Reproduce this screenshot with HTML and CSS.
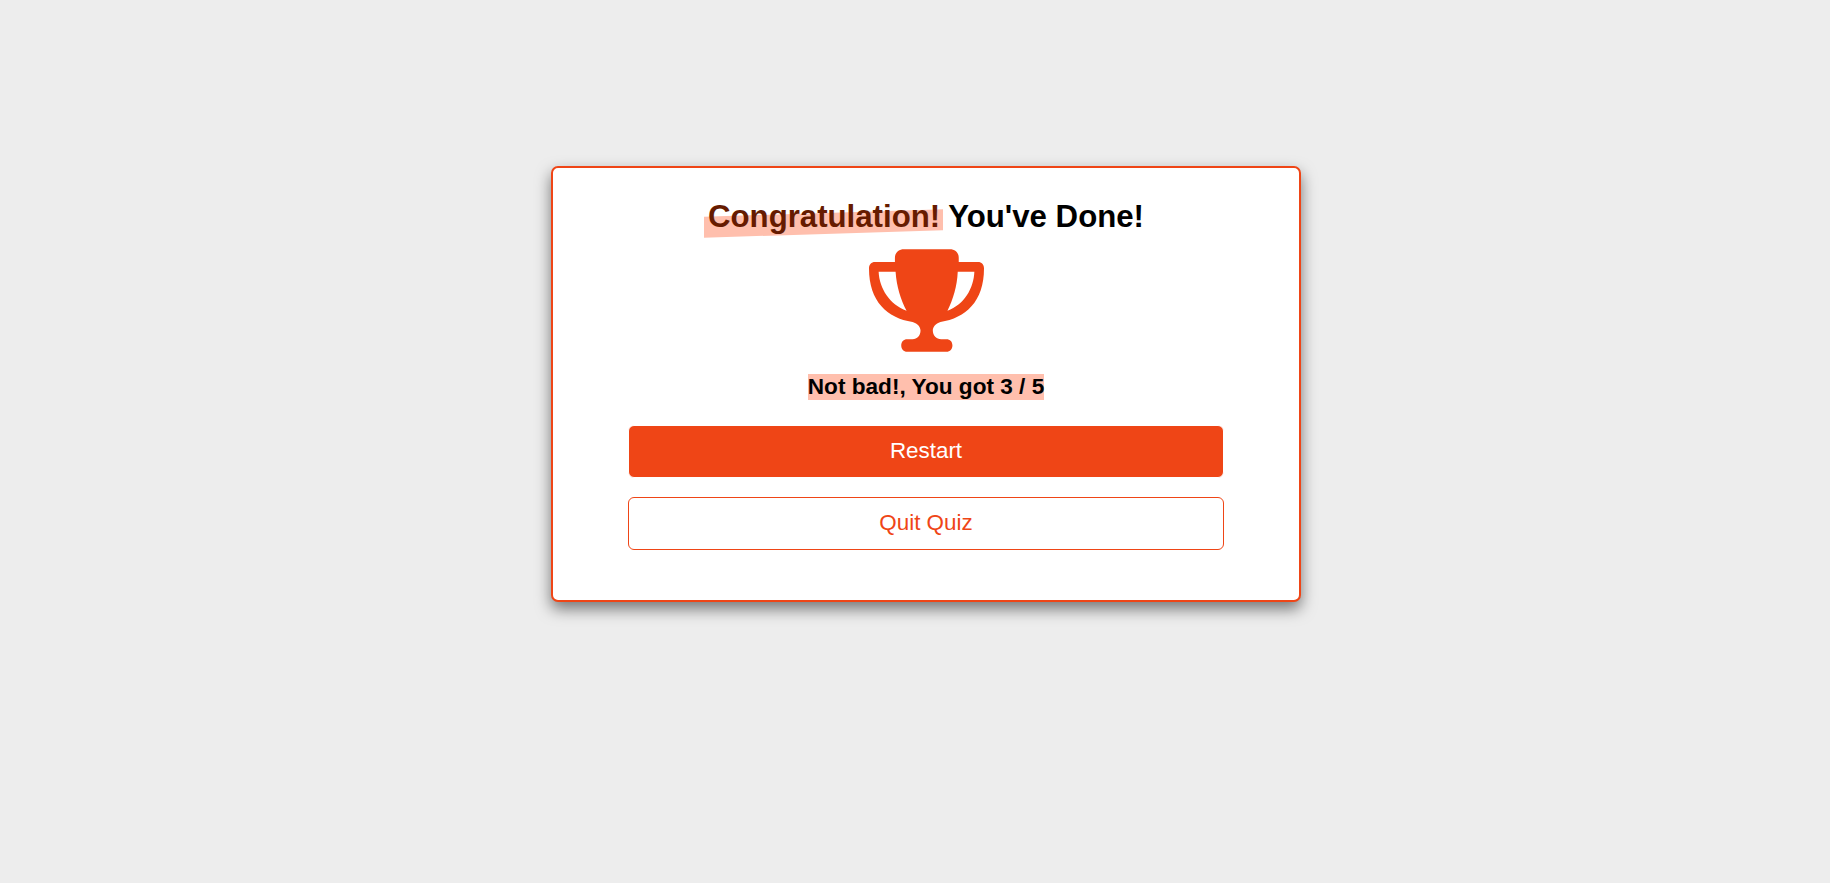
FILE: index.html
```html
<!DOCTYPE html>
<html lang="en">
<head>
    <meta charset="UTF-8">
    <meta name="viewport" content="width=device-width, initial-scale=1.0">
    <title>Quiz Result</title>
    <link rel="stylesheet" href="styles.css">
</head>
<body>

<div class="result-card">
    <h2 class="result-title"><span class="marker">Congratulation!</span> You've Done!</h2>

    <!-- Trophy -->
    <svg class="trophy" viewBox="55 28 346 309" aria-hidden="true">
        <path fill-rule="evenodd" d="M133 67V54C133 38 145 28 160 28H298C314 28 325 38 325 54V67H383C394 67 401 75 401 86C401 185 346 235 270 247C255 252 247 262 247 273C247 288 258 299 272 299H288C299 299 306 306 306 318C306 329 299 337 288 337H170C159 337 152 329 152 318C152 306 159 299 170 299H186C200 299 210 288 210 273C210 262 202 252 186 247C110 235 55 185 55 86C55 75 62 67 73 67ZM84 96C86 146 118 196 168 213C150 180 138 140 135 96ZM372 96H322C320 140 308 180 291 213C341 196 370 146 372 96Z"/>
    </svg>

    <p class="result-score"><span>Not bad!, You got 3 / 5</span></p>

    <button class="button button-fill">Restart</button>
    <button class="button button-line">Quit Quiz</button>
</div>

</body>
</html>
```

FILE: styles.css
```css
html, body { height: 100%; }
body { font-family: "Liberation Sans", Arial, sans-serif; margin: 0; overflow: hidden; background-color: #ededed; }
.result-card { display: flex; flex-direction: column; align-items: center; box-sizing: border-box; width: 750px; height: 436px; margin: 166px 0 0 551px; padding-top: 31px; background-color: white; border: 2px solid #ef4516; border-radius: 7px; box-shadow: 0 7px 15px rgba(0, 0, 0, 0.5); }
.result-title { margin: 0; font-size: 31.2px; line-height: 36px; font-weight: bold; color: black; }
.marker { position: relative; isolation: isolate; color: #661b00; }
.marker::after { content: ""; position: absolute; z-index: -1; left: -4px; right: -3px; top: 13.5px; height: 21px; background-color: #ffbfad; transform: skewY(-1.8deg); }
.trophy { width: 115px; height: 103px; margin-top: 14px; fill: #ef4516; }
.result-score { margin: 22px 0 0; font-size: 22.6px; line-height: 26px; font-weight: bold; }
.result-score span { background-color: #ffbfad; display: inline-block; }
.button { box-sizing: border-box; width: 596px; height: 53px; padding: 0 0 2px; font-family: inherit; font-size: 22.4px; border-radius: 6px; cursor: pointer; }
.button-fill { margin-top: 25px; color: white; background-color: #ef4516; border: 1px solid white; }
.button-line { margin-top: 19px; color: #ef4516; background-color: white; border: 1px solid #ef4516; }
```
